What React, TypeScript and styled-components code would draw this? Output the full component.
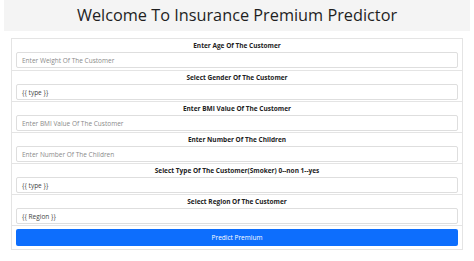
import React from 'react'
import styled, { createGlobalStyle } from 'styled-components'

const GlobalStyle = createGlobalStyle`
  html, body {
    margin: 0;
    padding: 0;
    background: #ffffff;
  }
  body {
    font-family: "Open Sans", "Noto Sans", sans-serif;
    color: #212529;
  }
`

const Page = styled.div`
  padding: 0 4px;
`

const Header = styled.header`
  background: #f4f4f4;
  height: 31px;
  display: flex;
  align-items: center;
  justify-content: center;
`

const Title = styled.h1`
  margin: 0;
  font-size: 16.3px;
  line-height: 1;
  font-weight: 500;
  color: #1f1f1f;
`

const Card = styled.form`
  margin: 7px 7px 0;
  border: 1px solid #e4e4e4;
  display: flex;
  flex-direction: column;
`

const Row = styled.div<{ first?: boolean }>`
  flex: 0 0 auto;
  height: 31px;
  box-sizing: border-box;
  padding: 2px 4px 0;
  border-top: ${p => (p.first ? 'none' : '1px solid #e4e4e4')};
  display: flex;
  flex-direction: column;
`

const Label = styled.label`
  flex: 0 0 auto;
  display: block;
  height: 9px;
  line-height: 9px;
  font-size: 6.5px;
  font-weight: 700;
  text-align: center;
  color: #222;
`

const Field = styled.div<{ filled?: boolean }>`
  flex: 0 0 auto;
  margin-top: 2px;
  height: 16px;
  box-sizing: border-box;
  border: 1px solid #dedede;
  border-radius: 2px;
  display: flex;
  align-items: center;
  padding: 0 5px;
  font-size: 6.5px;
  color: ${p => (p.filled ? '#444' : '#8a8a8a')};
`

const Footer = styled.div`
  border-top: 1px solid #e4e4e4;
  padding: 3px 4px 3px;
`

const Button = styled.button`
  display: block;
  width: 100%;
  height: 17px;
  border: none;
  border-radius: 2px;
  background: #0d6efd;
  color: #ffffff;
  font-family: inherit;
  font-size: 6.5px;
  padding: 0;
`

const rows = [
  { label: 'Enter Age Of The Customer', value: 'Enter Weight Of The Customer', filled: false },
  { label: 'Select Gender Of The Customer', value: '{{ type }}', filled: true },
  { label: 'Enter BMI Value Of The Customer', value: 'Enter BMI Value Of The Customer', filled: false },
  { label: 'Enter Number Of The Children', value: 'Enter Number Of The Children', filled: false },
  { label: 'Select Type Of The Customer(Smoker) 0--non 1--yes', value: '{{ type }}', filled: true },
  { label: 'Select Region Of The Customer', value: '{{ Region }}', filled: true },
]

const App = () => {
  return <>
    <GlobalStyle />
    <Page>
      <Header>
        <Title>Welcome To Insurance Premium Predictor</Title>
      </Header>
      <Card onSubmit={e => e.preventDefault()}>
        {rows.map((r, i) => (
          <Row key={i} first={i === 0}>
            <Label>{r.label}</Label>
            <Field filled={r.filled}>{r.value}</Field>
          </Row>
        ))}
        <Footer>
          <Button type="submit">Predict Premium</Button>
        </Footer>
      </Card>
    </Page>
  </>
}

export default App
